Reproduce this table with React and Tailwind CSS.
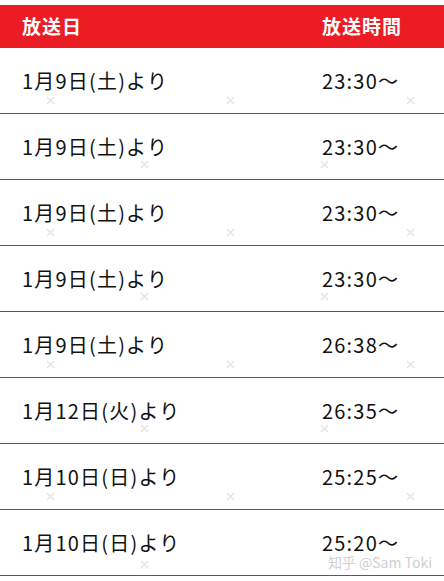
const rows = [
  { date: '1月9日(土)より', time: '23:30～' },
  { date: '1月9日(土)より', time: '23:30～' },
  { date: '1月9日(土)より', time: '23:30～' },
  { date: '1月9日(土)より', time: '23:30～' },
  { date: '1月9日(土)より', time: '26:38～' },
  { date: '1月12日(火)より', time: '26:35～' },
  { date: '1月10日(日)より', time: '25:25～' },
  { date: '1月10日(日)より', time: '25:20～' },
];

// faint watermark crosses scattered over the table
const marks = [
  [46, 96], [226, 96], [406, 96], [140, 160], [320, 160],
  [46, 228], [226, 228], [406, 228], [140, 292], [320, 292],
  [46, 360], [226, 360], [406, 360], [140, 424], [320, 424],
  [46, 492], [226, 492], [406, 492], [140, 560],
];

export default function App() {
  return (
    <div
      className="relative w-[444px] h-[581px] overflow-hidden bg-white pt-[5px]"
      style={{ fontFamily: '"Noto Sans CJK JP", "Noto Sans", sans-serif' }}
    >
      <div className="flex h-[43px] items-center bg-[#ec1c24] text-[19px] font-bold tracking-[1px] text-white">
        <div className="w-[300px] pl-[22px]">放送日</div>
        <div className="pl-[22px]">放送時間</div>
      </div>

      {rows.map((r, i) => (
        <div key={i}>
          <div className="flex h-[65px] items-center text-[20px] leading-[24px] tracking-[1.2px] text-[#111]">
            <div className="w-[300px] pl-[22px]">{r.date}</div>
            <div className="pl-[22px]">{r.time}</div>
          </div>
          <div className="h-px bg-[#d0262c]" />
        </div>
      ))}

      {marks.map(([x, y], i) => (
        <svg
          key={i}
          className="absolute h-[9px] w-[9px]"
          style={{ left: x, top: y }}
          viewBox="0 0 10 10"
        >
          <path d="M1 1L9 9M9 1L1 9" stroke="#e4e4e4" strokeWidth="1.6" />
        </svg>
      ))}

      <span
        className="absolute right-[12px] top-[555px] text-[14px] leading-[15px] text-[#cfcfcf]"
        style={{ fontFamily: '"Noto Sans CJK SC", "Liberation Sans", sans-serif' }}
      >
        知乎 @Sam Toki
      </span>
    </div>
  );
}
